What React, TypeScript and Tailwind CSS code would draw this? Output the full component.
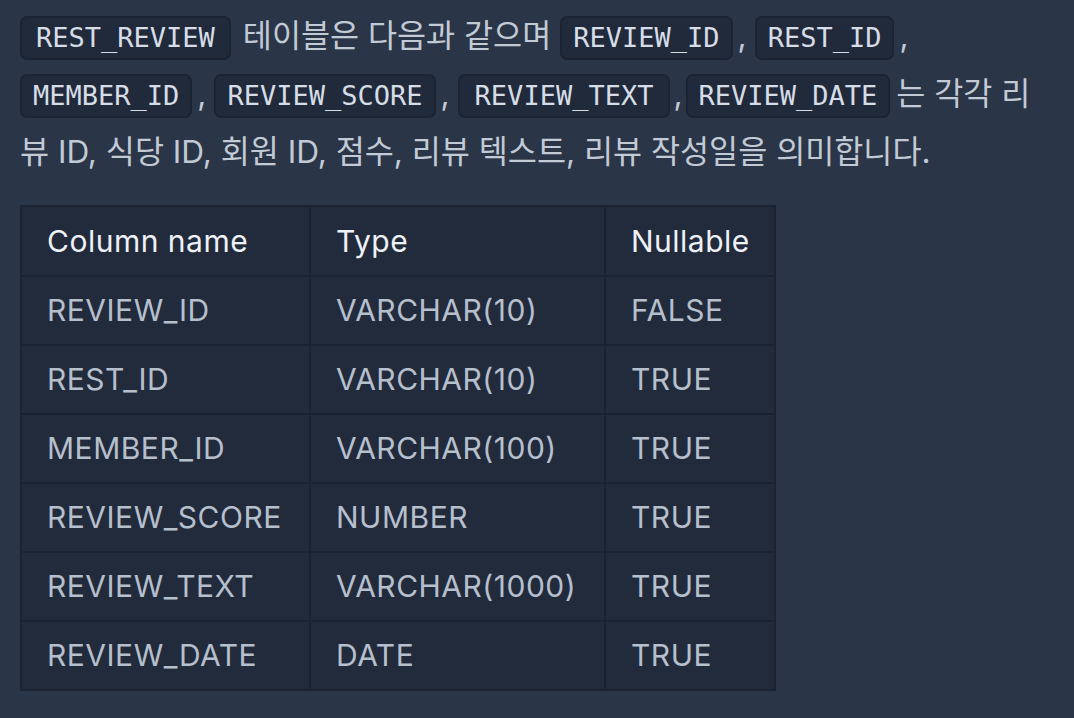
import React from "react";

const Code = ({ children, px = "px-[11px]" }: { children: React.ReactNode; px?: string }) => (
  <code
    className={`inline-block rounded-[7px] border-2 border-[#1c2433] bg-[#212a3b] ${px} align-middle font-['DejaVu_Sans_Mono','Liberation_Mono',monospace] text-[27px] leading-[40px] text-[#d6dde6]`}
  >
    {children}
  </code>
);

const Comma = ({ tight }: { tight?: boolean }) =>
  tight ? <span className="ml-[3px] mr-[3px]">,</span> : <span className="ml-[5px] mr-[8px]">,</span>;

const rows: [string, string, string][] = [
  ["REVIEW_ID", "VARCHAR(10)", "FALSE"],
  ["REST_ID", "VARCHAR(10)", "TRUE"],
  ["MEMBER_ID", "VARCHAR(100)", "TRUE"],
  ["REVIEW_SCORE", "NUMBER", "TRUE"],
  ["REVIEW_TEXT", "VARCHAR(1000)", "TRUE"],
  ["REVIEW_DATE", "DATE", "TRUE"],
];

export default function App() {
  return (
    <div className="min-h-[718px] w-[1074px] bg-[#2a3547] px-[20px] pt-[7px]">
      <div className="font-['Inter','Noto_Sans_CJK_KR',sans-serif] text-[31.6px] leading-[58px] text-[#c2cad5]">
        <div className="whitespace-nowrap">
          <Code px="px-[14px]">REST_REVIEW</Code>
          <span className="ml-[12px]">테이블은 다음과 같으며</span>
          <span className="ml-[9px]" />
          <Code>REVIEW_ID</Code>
          <Comma />
          <Code>REST_ID</Code>
          <Comma />
        </div>
        <div className="whitespace-nowrap">
          <Code>MEMBER_ID</Code>
          <Comma />
          <Code>REVIEW_SCORE</Code>
          <Comma />
          <Code px="px-[15px]">REVIEW_TEXT</Code>
          <Comma tight />
          <Code>REVIEW_DATE</Code>
          <span className="ml-[6px]">는 각각 리</span>
        </div>
        <div className="whitespace-nowrap">뷰 ID, 식당 ID, 회원 ID, 점수, 리뷰 텍스트, 리뷰 작성일을 의미합니다.</div>
      </div>
      <table className="mt-[24px] border-collapse border-2 border-[#1b2332] bg-[#222b3c] font-['Inter','Noto_Sans',sans-serif] text-[30px] tracking-[0.5px]">
        <thead>
          <tr className="h-[70px]">
            <th className="w-[289px] border-2 border-[#1b2332] pl-[25px] text-left font-normal text-[#eef1f5]">Column name</th>
            <th className="w-[295px] border-2 border-[#1b2332] pl-[25px] text-left font-normal text-[#eef1f5]">Type</th>
            <th className="w-[170px] border-2 border-[#1b2332] pl-[25px] text-left font-normal text-[#eef1f5]">Nullable</th>
          </tr>
        </thead>
        <tbody>
          {rows.map((r) => (
            <tr key={r[0]} className="h-[69px]">
              {r.map((c, i) => (
                <td key={i} className="border-2 border-[#1b2332] pl-[25px] text-[#b6bfcc]">
                  {c}
                </td>
              ))}
            </tr>
          ))}
        </tbody>
      </table>
    </div>
  );
}
